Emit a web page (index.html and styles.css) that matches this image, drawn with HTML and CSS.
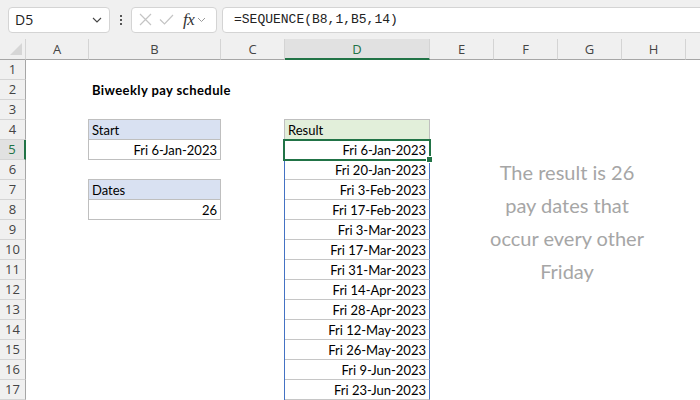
FILE: index.html
```html
<!DOCTYPE html>
<html lang="en">
<head>
  <meta charset="UTF-8">
  <meta name="viewport" content="width=device-width, initial-scale=1.0">
  <title>Biweekly pay schedule</title>
  <link rel="stylesheet" href="styles.css">
</head>
<body>
  <div class="app">
    <div class="toolbar">
      <div class="namebox">
        <span>D5</span>
        <svg class="chev" width="10" height="6" viewBox="0 0 10 6"><path d="M1 1l4 4 4-4" fill="none" stroke="#444" stroke-width="1.1"/></svg>
      </div>
      <div class="dots"><i></i><i></i><i></i></div>
      <div class="fxbox">
        <svg width="13" height="13" viewBox="0 0 13 13"><path d="M1 1l11 11M12 1L1 12" fill="none" stroke="#c4c4c4" stroke-width="1.2"/></svg>
        <svg width="15" height="11" viewBox="0 0 15 11"><path d="M1 5.5l4.5 4.5L14 1" fill="none" stroke="#c4c4c4" stroke-width="1.2"/></svg>
        <span class="fx">fx</span>
        <svg width="9" height="6" viewBox="0 0 9 6"><path d="M1 1l3.5 3.5L8 1" fill="none" stroke="#9a9a9a" stroke-width="1"/></svg>
      </div>
      <div class="formula">=SEQUENCE(B8,1,B5,14)</div>
    </div>

    <div class="sheet" id="sheet">
      <div class="note">The result is 26<br>pay dates that<br>occur every other<br>Friday</div>
    </div>
  </div>

  <script>
    const colWidths = [63, 132, 64, 145, 64, 64, 64, 64];
    const letters = ["A", "B", "C", "D", "E", "F", "G", "H"];
    const visibleRows = 17;
    const activeCol = "D";
    const activeRow = 5;

    const days = ["Sun", "Mon", "Tue", "Wed", "Thu", "Fri", "Sat"];
    const months = ["Jan", "Feb", "Mar", "Apr", "May", "Jun", "Jul", "Aug", "Sep", "Oct", "Nov", "Dec"];

    function fmt(d) {
      return `${days[d.getDay()]} ${d.getDate()}-${months[d.getMonth()]}-${d.getFullYear()}`;
    }

    let start = new Date(2023, 0, 6);
    let count = 26;

    // cell contents: address -> [text, classes]
    let cells = {
      B2: ["Biweekly pay schedule", "title"],
      B4: ["Start", "boxed top blue"],
      B5: [fmt(start), "boxed num"],
      B7: ["Dates", "boxed top blue"],
      B8: [String(count), "boxed num"],
      D4: ["Result", "boxed top green"]
    };

    // =SEQUENCE(B8,1,B5,14) spills down from D5
    for (let i = 0; i < count; i++) {
      let d = new Date(start);
      d.setDate(start.getDate() + i * 14);
      let row = 5 + i;
      if (row > visibleRows) break;
      cells["D" + row] = [fmt(d), "spill num"];
    }

    const sheet = document.getElementById("sheet");
    // last track is the partly visible column past H
    sheet.style.gridTemplateColumns = "26px " + colWidths.map(w => w + "px").join(" ") + " 64px";

    function add(cls, text) {
      let el = document.createElement("div");
      el.className = cls;
      if (text) el.textContent = text;
      sheet.appendChild(el);
      return el;
    }

    add("corner");
    letters.forEach(l => add("colhead" + (l === activeCol ? " sel" : ""), l));
    add("colhead");

    for (let r = 1; r <= visibleRows; r++) {
      add("rowhead" + (r === activeRow ? " sel" : ""), String(r));
      letters.forEach(l => {
        let addr = l + r;
        let c = cells[addr];
        let cls = "cell" + (c ? " " + c[1] : "");
        if (addr === activeCol + activeRow) cls += " active";
        add(cls, c ? c[0] : "");
      });
      add("cell");
    }
  </script>
</body>
</html>
```

FILE: styles.css
```css
body {
  margin: 0;
  background: #fff;
  overflow: hidden;
  font-family: "Lato", sans-serif;
  color: #000;
}
.app {
  width: 700px;
  height: 400px;
  overflow: hidden;
}

/* formula bar */
.toolbar {
  height: 39px;
  background: #f0f0f0;
  display: flex;
  align-items: center;
  padding-left: 8px;
}
.namebox {
  width: 102px;
  height: 26px;
  box-sizing: border-box;
  background: #fff;
  border: 1px solid #d4d4d4;
  border-radius: 4px;
  display: flex;
  align-items: center;
  justify-content: space-between;
  padding: 0 7px 0 6px;
  font: 14px "Open Sans", sans-serif;
  color: #222;
}
.dots {
  width: 21px;
  display: flex;
  flex-direction: column;
  align-items: center;
  gap: 2px;
}
.dots i {
  width: 2px;
  height: 2px;
  background: #555;
}
.fxbox {
  width: 86px;
  height: 26px;
  box-sizing: border-box;
  background: #fff;
  border: 1px solid #d4d4d4;
  border-radius: 4px;
  display: flex;
  align-items: center;
  padding: 0 4px 0 7px;
  gap: 7px;
}
.fx {
  font: italic 17px "Liberation Serif", serif;
  color: #333;
  margin-left: 2px;
  margin-right: -4px;
  letter-spacing: -0.5px;
}
.formula {
  flex: 1;
  height: 26px;
  box-sizing: border-box;
  margin-left: 5px;
  margin-right: -10px;
  background: #fff;
  border: 1px solid #d4d4d4;
  border-radius: 4px;
  padding-left: 11px;
  font: 13px/24px "Liberation Mono", monospace;
  color: #222;
}

/* grid */
.sheet {
  position: relative;
  display: grid;
  grid-template-rows: 21px;
  grid-auto-rows: 20px;
}
.corner {
  background: #f0f0f0;
  border-right: 1px solid #d4d4d4;
  border-bottom: 1px solid #a6a6a6;
  position: relative;
}
.corner::after {
  content: "";
  position: absolute;
  right: 3px;
  bottom: 4px;
  width: 12px;
  height: 12px;
  background: #d6d6d6;
  clip-path: polygon(100% 0, 100% 100%, 0 100%);
}
.colhead {
  background: #f0f0f0;
  border-right: 1px solid #d4d4d4;
  border-bottom: 1px solid #a6a6a6;
  text-align: center;
  font: 13px/21px "Open Sans", sans-serif;
  color: #444;
}
.colhead.sel {
  background: #e1e1e1;
  border-bottom: 2px solid #217346;
  color: #217346;
}
.rowhead {
  background: #f0f0f0;
  border-right: 1px solid #a6a6a6;
  border-bottom: 1px solid #d4d4d4;
  text-align: center;
  font: 13px/19px "Open Sans", sans-serif;
  color: #444;
}
.rowhead.sel {
  background: #e1e1e1;
  border-right: 2px solid #217346;
  color: #217346;
}
.cell {
  border-right: 1px solid transparent;
  border-bottom: 1px solid transparent;
  padding: 0 3px;
  font-size: 13px;
  line-height: 20px;
  white-space: nowrap;
}
.title {
  font-weight: bold;
  letter-spacing: 0.4px;
}
.num {
  text-align: right;
}
.boxed {
  border-right-color: #bfbfbf;
  border-bottom-color: #bfbfbf;
  box-shadow: -1px 0 0 #bfbfbf;
}
.boxed.top {
  box-shadow: -1px 0 0 #bfbfbf, 0 -1px 0 #bfbfbf, -1px -1px 0 #bfbfbf;
}
.blue {
  background: #d9e1f2;
}
.green {
  background: #e2efda;
}
.spill {
  border-right-color: #4472c4;
  border-bottom-color: #c6c6c6;
  box-shadow: -1px 0 0 #4472c4;
}

/* selected cell with fill handle */
.active {
  position: relative;
  z-index: 1;
}
.active::after {
  content: "";
  position: absolute;
  left: -2px;
  top: -1px;
  right: -2px;
  bottom: -2px;
  border: 2px solid #217346;
}
.active::before {
  content: "";
  position: absolute;
  right: -4px;
  bottom: -4px;
  width: 5px;
  height: 5px;
  background: #217346;
  border: 1px solid #fff;
  z-index: 2;
}

/* floating text box */
.note {
  position: absolute;
  left: 467px;
  top: 117px;
  width: 200px;
  text-align: center;
  font-size: 20px;
  line-height: 33px;
  color: #a6a6a6;
  z-index: 3;
}
```
